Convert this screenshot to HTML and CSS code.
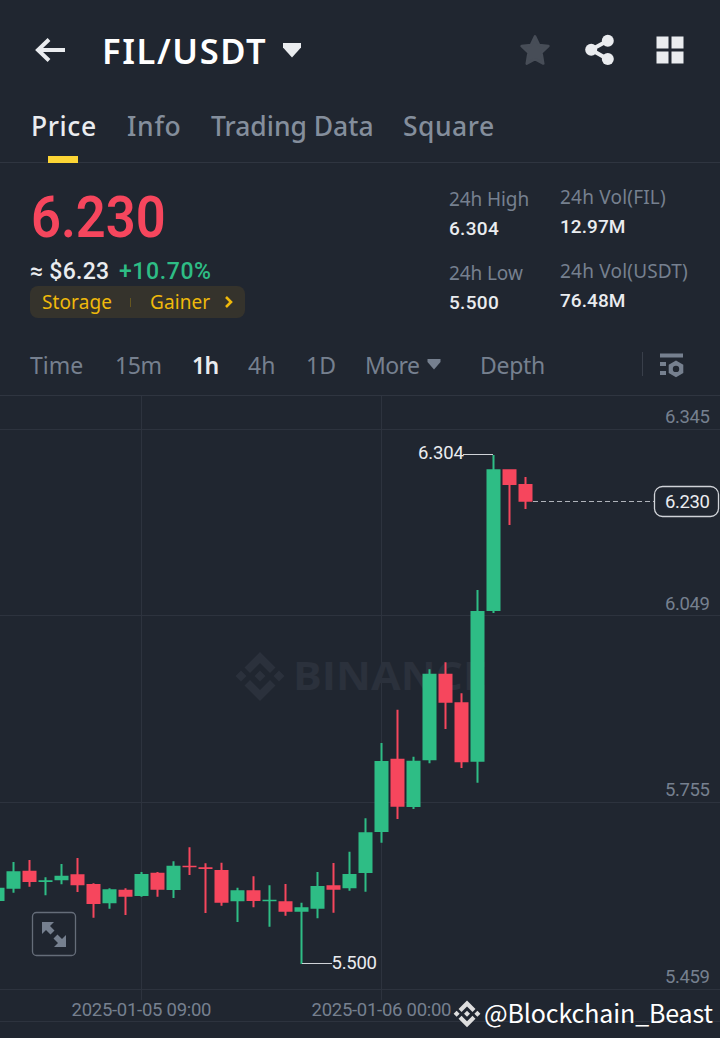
FILE: index.html
```html
<!DOCTYPE html>
<html lang="en">
<head>
<meta charset="utf-8">
<title>FIL/USDT</title>
<link rel="stylesheet" href="styles.css">
</head>
<body>
<header class="topbar">
  <svg class="back" width="30" height="26" viewBox="0 0 30 26"><path d="M14 2.500 3 13l11 10.500M2.500 13H30" fill="none" stroke="#eaecef" stroke-width="4"/></svg>
  <h1 class="pair">FIL/USDT</h1>
  <svg class="pair-caret" width="18" height="15" viewBox="0 0 18 15"><path d="M0 0h18v4.500L9 14.500 0 4.500z" fill="#eaecef"/></svg>
  <div class="actions">
    <svg width="30" height="32" viewBox="0 0 30 32"><path d="m15 2.300 4 8.600 9.400 1.200-6.900 6.500 1.800 11L15 25.200l-8.300 4.400 1.800-11L1.600 12.100l9.400-1.200z" fill="#474d57" stroke="#474d57" stroke-width="2.500" stroke-linejoin="round"/></svg>
    <svg width="30" height="32" viewBox="0 0 30 32"><g fill="#eaecef"><circle cx="6.200" cy="15.700" r="6"/><circle cx="22.800" cy="6.700" r="6"/><circle cx="22.800" cy="25" r="6"/></g><path d="M22.500 6.700 6.200 15.700l16.300 9.300" fill="none" stroke="#eaecef" stroke-width="4"/></svg>
    <svg width="28" height="28" viewBox="0 0 28 28"><path d="M.5.500h12v12H.5zM15.500.500h12v12h-12zM.5 15.500h12v12H.5zM15.500 15.500h12v12h-12z" fill="#eaecef"/></svg>
  </div>
</header>
<nav class="tabs">
  <span class="tab tab-active">Price</span>
  <span class="tab tab-info">Info</span>
  <span class="tab tab-data">Trading Data</span>
  <span class="tab tab-square">Square</span>
</nav>
<section class="summary">
  <div class="quote">
    <div class="last">6.230</div>
    <div class="change"><span class="fiat">≈ $6.23</span><span class="percent">+10.70%</span></div>
    <div class="tags">
      <span class="tag-storage">Storage</span><i class="tag-rule"></i><span class="tag-gainer">Gainer</span>
      <svg width="8" height="12" viewBox="0 0 8 12"><path d="m1 1 5 5-5 5" fill="none" stroke="#f0b90b" stroke-width="2.600"/></svg>
    </div>
  </div>
  <dl class="stats stats-price">
    <dt>24h High</dt><dd>6.304</dd>
    <dt class="low">24h Low</dt><dd>5.500</dd>
  </dl>
  <dl class="stats stats-volume">
    <dt>24h Vol(FIL)</dt><dd>12.97M</dd>
    <dt class="usdt">24h Vol(USDT)</dt><dd>76.48M</dd>
  </dl>
</section>
<nav class="intervals">
  <span>Time</span><span class="minutes">15m</span><b>1h</b><span>4h</span><span>1D</span>
  <span class="more">More <svg width="14" height="11" viewBox="0 0 14 11"><path d="M.5 0h13v3L7 10.500.5 3z" fill="#76808f"/></svg></span>
  <span class="depth">Depth</span>
  <i class="interval-rule"></i>
  <svg class="settings" width="26" height="26" viewBox="0 0 26 26"><path d="M1 1.500h23v4H1zM1 10h6v4H1zM1 19h6v4H1z" fill="#76808f"/><path fill-rule="evenodd" d="m17 8.500 7.300 4.200v8.400L17 25.300l-7.300-4.200v-8.400zm0 5.200a3.200 3.200 0 1 0 0 6.400 3.200 3.200 0 0 0 0-6.400z" fill="#76808f"/></svg>
</nav>
<main class="chart">
  <svg width="720" height="642" viewBox="0 396 720 642">
    <g class="grid"><path d="M0 429.500h720M0 615.500h720M0 802.500h720M0 989.500h720M0 1021.500h720M141.500 396v604M381.500 396v604"/></g>
    <g class="watermark">
      <g id="mark"><path d="m260 652 15.500 15.500-5.500 5.500-10-10-10 10-5.500-5.500zM260 701l15.500-15.500-5.500-5.500-10 10-10-10-5.500 5.500zM241 670.500l5.500 5.500-5.500 5.500-5.500-5.500zM260 670.500l5.500 5.500-5.500 5.500-5.500-5.500zM279 670.500l5.500 5.500-5.500 5.500-5.500-5.500z"/></g>
      <text x="293" y="690" textLength="194" lengthAdjust="spacingAndGlyphs">BINANCE</text>
    </g>
    <g id="candles"></g>
    <path class="leader" d="M463 454.500h30M302 963.500h30"/>
    <path class="last-line" d="M533 501.500h121"/>
    <rect class="last-box" x="654.500" y="486.500" width="64" height="30" rx="8"/>
    <g class="callout">
      <text x="418" y="459" textLength="46">6.304</text>
      <text x="331.500" y="969" textLength="45.500">5.500</text>
      <text x="665" y="508" textLength="45">6.230</text>
    </g>
    <g class="axis">
      <text x="665" y="423" textLength="45">6.345</text>
      <text x="665" y="610" textLength="45">6.049</text>
      <text x="665" y="796" textLength="45">5.755</text>
      <text x="665" y="983" textLength="45">5.459</text>
      <text x="71.500" y="1016" textLength="140">2025-01-05 09:00</text>
      <text x="311.500" y="1016" textLength="140">2025-01-06 00:00</text>
    </g>
    <g class="expand"><rect x="32.500" y="912.500" width="43" height="43" rx="4"/><path d="M42 922h12l-4 4 4.500 4.500-4 4L46 930l-4 4zM66 947H54l4-4-4.500-4.500 4-4L62 939l4-4z"/></g>
    <use class="credit-mark" href="#mark" transform="translate(324.800 643.900) scale(.547)"/>
    <text class="credit" x="484" y="1023" textLength="229">@Blockchain_Beast</text>
  </svg>
</main>
<script src="chart.js"></script>
</body>
</html>
```
FILE: styles.css
```css
* { box-sizing: border-box; }
body { margin: 0; width: 720px; background: #202630; color: #eaecef; font-family: Roboto, "Noto Sans", sans-serif; overflow: hidden; }
svg { display: block; flex: none; }
.topbar { height: 100px; display: flex; align-items: center; padding: 0 36px 0 35px; }
.pair { margin: 2px 0 0 37px; width: 166px; font: 600 34.500px/44px "Noto Sans", sans-serif; letter-spacing: 1.600px; color: #fff; white-space: nowrap; }
.pair-caret { margin-left: 15px; }
.actions { display: flex; align-items: center; margin-left: auto; }
.actions svg + svg { margin-left: 35px; }
.actions svg:last-child { margin-left: 41px; }
.tabs { height: 63px; border-bottom: 1px solid #2f3540; display: grid; grid-template-columns: 96px 84px 192px 120px; padding-left: 31px; font: 500 26.500px/53px "Noto Sans", sans-serif; color: #848e9c; white-space: nowrap; }
.tab-active { color: #eaecef; position: relative; letter-spacing: .6px; }
.tab-info { letter-spacing: .7px; }
.tab-data { letter-spacing: -.02px; }
.tab-square { letter-spacing: .5px; }
.tab-active::after { content: ""; position: absolute; left: 17px; top: 56px; width: 30px; height: 6.500px; background: #fcd535; }
.summary { height: 174px; display: grid; grid-template-columns: 419px 111px 1fr; padding-left: 30px; }
.last { height: 82px; padding: 22px 0 0 1px; color: #f6465d; font-size: 57px; line-height: 66px; font-weight: 600; transform: scaleX(.92); transform-origin: 0 0; }
.change { height: 41px; padding-top: 12px; font-size: 23px; line-height: 30px; font-weight: 500; letter-spacing: .25px; }
.change span { display: inline-block; width: 89px; white-space: nowrap; }
.change .percent { color: #2ebd85; letter-spacing: .6px; }
.tags { width: 215px; height: 32px; border-radius: 8px; background: #35332c; color: #f0b90b; display: flex; align-items: center; padding-left: 12px; font: 19px/32px "Noto Sans", sans-serif; letter-spacing: .1px; }
.tag-storage { width: 70px; }
.tag-rule { width: 1px; height: 9px; margin: 0 19px 0 18px; background: #675720; }
.tag-gainer { width: 75px; }
.stats { margin: 0; padding-top: 23px; font-size: 19px; line-height: 26px; white-space: nowrap; }
.stats-volume { padding-top: 21px; }
.stats dt { height: 26px; color: #76808f; font-family: "Noto Sans", sans-serif; letter-spacing: -.1px; }
.stats-volume dt { letter-spacing: .2px; }
.stats dd { margin: 4px 0 18px; height: 26px; font-weight: 500; letter-spacing: .3px; }
.stats-volume dd { letter-spacing: .05px; }
.intervals { height: 59px; border-bottom: 1px solid #2f3540; display: grid; grid-template-columns: 85px 77px 56px 58px 59px 115px 162px 17px 26px; padding-left: 30px; font: 23px/57px "Noto Sans", sans-serif; color: #76808f; white-space: nowrap; }
.minutes { letter-spacing: -.4px; }
.depth { letter-spacing: -.3px; }
.intervals b { color: #eaecef; font-weight: 600; letter-spacing: -.6px; }
.more { display: flex; align-items: center; gap: 8px; height: 56px; letter-spacing: -.6px; }
.more svg { margin-top: -2px; }
.interval-rule { width: 1px; height: 24px; margin-top: 15px; background: #393f4a; }
.settings { margin-top: 15px; }
.chart text { font-family: Roboto, sans-serif; }
.grid { fill: none; stroke: #2d333e; stroke-width: 1; }
.watermark { fill: #2b313c; }
.chart .watermark text { font: 700 39px "Open Sans", sans-serif; }
.callout { fill: #eaecef; font-size: 18.500px; }
.axis { fill: #76808f; font-size: 18.500px; }
.up { fill: #2ebd85; }
.down { fill: #f6465d; }
.leader { stroke: #d0d3d8; fill: none; }
.last-line { stroke: #afb3ba; stroke-dasharray: 5 3; }
.last-box { fill: #202630; stroke: #d0d3d8; stroke-width: 1.300; }
.expand rect { fill: #202630; stroke: #656d79; stroke-width: 1.300; }
.expand path { fill: #76808f; }
.credit-mark { fill: #dedede; }
.chart .credit { font: 25px "Noto Sans CJK SC", sans-serif; fill: #fff; }
```
FILE: chart.js
```javascript
// x centre, direction, body top, body bottom, wick top, wick bottom
const candles = [
  [-2.5, 1, 887.7, 901, 887.7, 901],
  [13.5, 1, 871.3, 888.7, 862, 892.7], [29.5, 0, 870.7, 882, 860, 886.7],
  [45.5, 1, 880.3, 882, 877.3, 895.3], [61.5, 1, 875.7, 880.3, 864, 884.3],
  [77.5, 0, 874.3, 885.3, 858, 892], [93.5, 0, 884, 904, 883.3, 917.7],
  [109.5, 1, 889.3, 903.3, 888.3, 908.7], [125.5, 0, 889.7, 896.7, 888.3, 915],
  [141.5, 1, 874, 896, 872, 896.7], [157.5, 0, 872.7, 889.7, 872, 896.7],
  [173.5, 1, 865.7, 890, 861.3, 898], [189.5, 0, 865.7, 867.3, 847.3, 875],
  [205.5, 0, 867.3, 869, 863.3, 913], [221.5, 0, 870, 902.7, 862.7, 905.7],
  [237.5, 1, 890.3, 901.3, 887.7, 922], [253.5, 0, 890.3, 901, 876.3, 907.3],
  [269.5, 1, 899.7, 901.2, 885.3, 926.7], [285.5, 0, 901.3, 911.7, 884, 915.7],
  [301.5, 1, 907.3, 911.7, 902.7, 964], [317.5, 1, 886, 908.7, 872, 918.3],
  [333.5, 0, 885.3, 889.7, 863, 912.7], [349.5, 1, 874, 888.3, 851.7, 890.7],
  [365.5, 1, 832.3, 873, 818.3, 891.7], [381.5, 1, 761, 832, 743, 842.7],
  [397.5, 0, 758.7, 806.7, 709.7, 819], [413.5, 1, 760.7, 807, 756.7, 809],
  [429.5, 1, 673.7, 760.3, 669.3, 763.3], [445.5, 0, 673.7, 702.7, 662.3, 729],
  [461.5, 0, 702.3, 762.3, 693.3, 768], [477.5, 1, 611, 761.7, 590, 782.7],
  [493.5, 1, 469.3, 611, 455, 613], [509.5, 0, 469.3, 485, 469.3, 525],
  [525.5, 0, 484, 501.7, 477, 509]
];
const layer = document.getElementById("candles");
for (const [x, rising, top, bottom, high, low] of candles) {
  const path = document.createElementNS("http://www.w3.org/2000/svg", "path");
  path.setAttribute("class", rising ? "up" : "down");
  path.setAttribute("d", `M${x - 7} ${top}h14V${bottom}h-14zM${x - 1} ${high}h2V${low}h-2z`);
  layer.append(path);
}
```
